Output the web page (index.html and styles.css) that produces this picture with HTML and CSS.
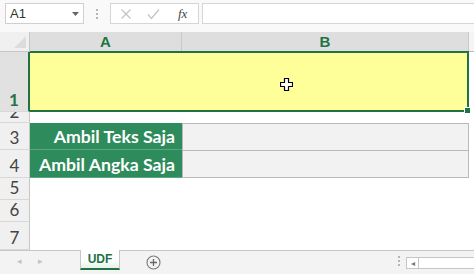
FILE: index.html
```html
<!DOCTYPE html>
<html lang="en">
<head>
    <meta charset="UTF-8">
    <title>UDF</title>
    <link rel="stylesheet" href="styles.css">
</head>
<body>
    <div class="app">
        <div class="formula-bar">
            <div class="name-box">
                <span>A1</span>
                <svg class="caret" width="7" height="4" viewBox="0 0 7 4"><path d="M0 0h7L3.5 4z" fill="#666"/></svg>
            </div>
            <div class="grip"><i></i><i></i><i></i></div>
            <div class="fx-box">
                <svg class="tool" width="12" height="12" viewBox="0 0 12 12"><path d="M1.5 1.5l9 9M10.5 1.5l-9 9" stroke="#c4c4c4" stroke-width="1.3" fill="none"/></svg>
                <svg class="tool" width="13" height="12" viewBox="0 0 13 12"><path d="M1 6.5l3.5 4L12 1.5" stroke="#c4c4c4" stroke-width="1.3" fill="none"/></svg>
                <span class="fx">fx</span>
            </div>
            <div class="formula-input"></div>
        </div>

        <div class="sheet">
            <div class="corner"></div>
            <div class="col-head sel">A</div>
            <div class="col-head sel last">B</div>
            <div class="col-head rest"></div>

            <div class="row-head sel">1</div>
            <div class="selection">
                <svg class="cursor" width="13" height="13" viewBox="0 0 13 13"><path d="M4.5 0.5h4v4h4v4h-4v4h-4v-4h-4v-4h4z" fill="#fff" stroke="#000" stroke-width="1.2" stroke-linejoin="round"/></svg>
                <span class="handle"></span>
            </div>
            <div class="cell"></div>

            <div class="row-head short">2</div>
            <div class="cell"></div><div class="cell"></div><div class="cell"></div>

            <div class="row-head">3</div>
            <div class="cell label">Ambil Teks Saja</div>
            <div class="cell box">&nbsp;</div>
            <div class="cell"></div>

            <div class="row-head">4</div>
            <div class="cell label">Ambil Angka Saja</div>
            <div class="cell box bottom">&nbsp;</div>
            <div class="cell"></div>

            <div class="row-head">5</div>
            <div class="cell"></div><div class="cell"></div><div class="cell"></div>
            <div class="row-head">6</div>
            <div class="cell"></div><div class="cell"></div><div class="cell"></div>
            <div class="row-head">7</div>
            <div class="cell"></div><div class="cell"></div><div class="cell"></div>
        </div>

        <div class="tabs">
            <div class="nav">
                <span class="arrow">&#9666;</span>
                <span class="arrow">&#9656;</span>
            </div>
            <div class="tab">UDF</div>
            <svg class="add" width="15" height="15" viewBox="0 0 15 15"><circle cx="7.5" cy="7.5" r="6.5" fill="none" stroke="#777" stroke-width="1.1"/><path d="M7.5 4v7M4 7.5h7" stroke="#666" stroke-width="1.3"/></svg>
            <div class="spacer"></div>
            <div class="grip small"><i></i><i></i><i></i></div>
            <div class="hscroll">
                <span class="scroll-btn">&#9666;</span>
            </div>
        </div>
    </div>
</body>
</html>
```

FILE: styles.css
```css
body { margin: 0; background: #fff; font-family: "Liberation Sans", Arial, sans-serif; overflow: hidden; }
.app { width: 474px; height: 274px; display: flex; flex-direction: column; overflow: hidden; }

/* formula bar */
.formula-bar { height: 32px; box-sizing: border-box; padding: 3px 0 0 5px; display: flex; align-items: flex-start; background: #f9f9f9; }
.name-box { width: 79px; height: 21px; box-sizing: border-box; border: 1px solid #d0d0d0; background: #fff; display: flex; align-items: center; justify-content: space-between; padding: 0 4px 0 4px; font-size: 13px; color: #333; }
.caret { margin-top: 1px; }
.grip { width: 26px; height: 21px; display: flex; flex-direction: column; align-items: center; justify-content: center; gap: 2px; }
.grip i { display: block; width: 2px; height: 2px; background: #b5b5b5; }
.fx-box { width: 89px; height: 21px; box-sizing: border-box; border: 1px solid #d6d6d6; background: #fff; display: flex; align-items: center; padding-left: 9px; gap: 15px; }
.fx { font-family: "Liberation Serif", serif; font-style: italic; font-size: 13px; color: #444; margin-left: 3px; }
.formula-input { flex: 1; height: 21px; box-sizing: border-box; border: 1px solid #d6d6d6; border-right: none; background: #fff; margin-left: 3px; }

/* grid */
.sheet { display: grid; grid-template-columns: 30px 152px 287px 5px; grid-template-rows: 20px 60px 11px 27px 28px 22px 22px 28px; background: #fff; }
.corner { background: #f0f0f0; border-right: 1px solid #c6c6c6; border-bottom: 1px solid #c6c6c6; position: relative; overflow: hidden; }
.corner::after { content: ""; position: absolute; right: 3px; bottom: 3px; border-style: solid; border-width: 0 0 12px 12px; border-color: transparent transparent #dcdcdc transparent; }
.col-head { background: #e6e6e6; border-bottom: 1px solid #bdbdbd; border-right: 1px solid #c8c8c8; display: flex; align-items: center; justify-content: center; font-size: 15px; color: #444; }
.col-head.sel { background: #dedede; color: #217346; font-weight: bold; }
.col-head.last { border-right: 1px solid #c8c8c8; }
.col-head.rest { background: #f4f4f4; border-right: none; }
.row-head { background: #f0f0f0; border-right: 1px solid #c6c6c6; border-bottom: 1px solid #d8d8d8; display: flex; align-items: flex-end; justify-content: center; font-family: Lato, "Liberation Sans", sans-serif; font-size: 17px; color: #444; overflow: hidden; padding-bottom: 1px; box-sizing: border-box; }
.row-head.sel { background: #e1e1e1; color: #217346; font-weight: bold; border-right: 2px solid #217346; padding-bottom: 1px; }
.row-head.short { padding-bottom: 0; }
.cell { font-size: 15px; }
.selection { grid-column: 2 / 4; background: #ffff99; border: 2px solid #217346; border-left: none; margin-top: -1px; position: relative; }
.cursor { position: absolute; left: 250px; top: 25px; }
.handle { position: absolute; right: -4px; bottom: -4px; width: 5px; height: 5px; background: #217346; border: 1px solid #fff; }
.label { background: #2e8b5b; color: #fff; font-family: Lato, "Liberation Sans", sans-serif; font-weight: bold; font-size: 17.7px; display: flex; align-items: flex-end; justify-content: flex-end; padding: 0 7px 2px 0; border-bottom: 1px solid #5aa77f; white-space: nowrap; }
.box { background: #f2f2f2; border: 1px solid #b9b9b9; border-bottom: none; }
.box.bottom { border-bottom: 1px solid #b9b9b9; }

/* sheet tabs */
.tabs { flex: 1; background: #f3f3f3; border-top: 1px solid #c6c6c6; display: flex; align-items: flex-start; }
.nav { width: 80px; display: flex; gap: 16px; padding: 5px 0 0 17px; box-sizing: border-box; font-size: 9px; color: #c3c3c3; }
.tab { width: 40px; height: 20px; box-sizing: border-box; margin-top: -1px; background: linear-gradient(#fff 55%, #e6f1ea); border: 1px solid #c6c6c6; border-top: none; border-bottom: 2px solid #217346; color: #217346; font-weight: bold; font-size: 12px; display: flex; align-items: center; justify-content: center; }
.add { margin: 4px 0 0 26px; }
.spacer { flex: 1; }
.grip.small { width: 14px; height: 16px; margin-top: 2px; }
.hscroll { width: 68px; height: 12px; margin: 6px 0 0 0; box-sizing: border-box; border: 1px solid #c6c6c6; border-right: none; background: #fff; }
.scroll-btn { display: flex; align-items: center; justify-content: center; width: 11px; height: 10px; border-right: 1px solid #c6c6c6; font-size: 8px; color: #777; }
```
